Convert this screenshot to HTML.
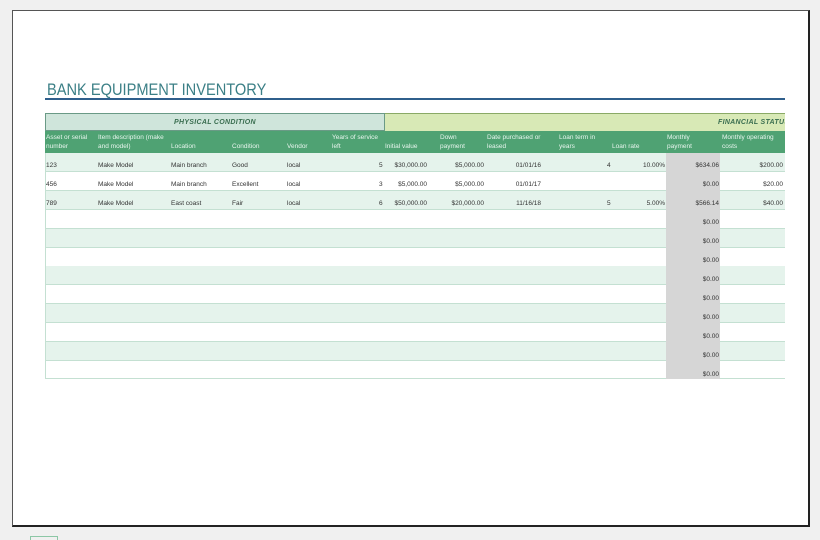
<!DOCTYPE html>
<html><head><style>
*{margin:0;padding:0;box-sizing:border-box}
body{width:820px;height:539px;background:#f0f0f0;position:relative;overflow:hidden;font-family:"Liberation Sans",sans-serif}
.page{position:absolute;left:12px;top:10px;width:798px;height:517px;background:#fff;border:1px solid #555;border-right:2px solid #222;border-bottom:2px solid #222}
.a{position:absolute;white-space:nowrap;font-size:6.5px;color:#333;line-height:8px}
.h{color:#e8f5ee;font-size:6.5px;position:absolute;white-space:nowrap;line-height:9px}
.r{text-align:right}
.row{position:absolute;left:45px;width:740px;height:19px;border-bottom:1px solid #c4e0d2}
</style></head><body>
<div class="page"></div>
<div style="position:absolute;left:30px;top:536px;width:28px;height:4px;border:1px solid #8cc7a6;border-bottom:none"></div>
<div style="position:absolute;left:47px;top:80px;font-size:17px;color:#3b7f86;transform:scaleX(0.86);transform-origin:0 0;white-space:nowrap">BANK EQUIPMENT INVENTORY</div>
<div style="position:absolute;left:45px;top:98px;width:740px;height:2px;background:#2f5f8c"></div>
<div style="position:absolute;left:45px;top:113px;width:340px;height:18px;background:#cfe5db;border:1px solid #6a9a86"></div>
<div style="position:absolute;left:385px;top:113px;width:400px;height:18px;background:#d8e9b6;border-top:1px solid #8aaa66;overflow:hidden"><div style="position:absolute;left:333px;top:5px;font-size:7px;font-weight:bold;font-style:italic;color:#3a6e50;letter-spacing:0.3px;white-space:nowrap">FINANCIAL STATUS</div></div>
<div style="position:absolute;left:174px;top:119px;font-size:7px;font-weight:bold;font-style:italic;color:#3a6e50;letter-spacing:0.3px">PHYSICAL CONDITION</div>
<div style="position:absolute;left:45px;top:131px;width:740px;height:22px;background:#4fa273"></div>
<div class="h" style="left:46px;top:133px">Asset or serial<br>number</div>
<div class="h" style="left:98px;top:133px">Item description (make<br>and model)</div>
<div class="h" style="left:171px;top:142px">Location</div>
<div class="h" style="left:232px;top:142px">Condition</div>
<div class="h" style="left:287px;top:142px">Vendor</div>
<div class="h" style="left:332px;top:133px">Years of service<br>left</div>
<div class="h" style="left:385px;top:142px">Initial value</div>
<div class="h" style="left:440px;top:133px">Down<br>payment</div>
<div class="h" style="left:487px;top:133px">Date purchased or<br>leased</div>
<div class="h" style="left:559px;top:133px">Loan term in<br>years</div>
<div class="h" style="left:612px;top:142px">Loan rate</div>
<div class="h" style="left:667px;top:133px">Monthly<br>payment</div>
<div class="h" style="left:722px;top:133px">Monthly operating<br>costs</div>
<div class="row" style="top:153px;background:#e5f3ec"></div>
<div class="row" style="top:172px"></div>
<div class="row" style="top:191px;background:#e5f3ec"></div>
<div class="row" style="top:210px"></div>
<div class="row" style="top:229px;background:#e5f3ec"></div>
<div class="row" style="top:248px"></div>
<div class="row" style="top:266px;background:#e5f3ec"></div>
<div class="row" style="top:285px"></div>
<div class="row" style="top:304px;background:#e5f3ec"></div>
<div class="row" style="top:323px"></div>
<div class="row" style="top:342px;background:#e5f3ec"></div>
<div class="row" style="top:360px"></div>
<div style="position:absolute;left:45px;top:153px;width:1px;height:226px;background:#c4e0d2"></div>
<div style="position:absolute;left:666px;top:153px;width:54px;height:226px;background:#d6d6d6"></div>
<div class="a" style="left:46px;top:162px">123</div><div class="a" style="left:98px;top:162px">Make Model</div><div class="a" style="left:171px;top:162px">Main branch</div><div class="a" style="left:232px;top:162px">Good</div><div class="a" style="left:287px;top:162px">local</div>
<div class="a" style="left:379px;top:162px">5</div><div class="a r" style="right:393px;top:162px">$30,000.00</div><div class="a r" style="right:336px;top:162px">$5,000.00</div><div class="a r" style="right:279px;top:162px">01/01/16</div><div class="a" style="left:607px;top:162px">4</div><div class="a r" style="right:155px;top:162px">10.00%</div><div class="a r" style="right:101px;top:162px">$634.06</div><div class="a r" style="right:37px;top:162px">$200.00</div>
<div class="a" style="left:46px;top:181px">456</div><div class="a" style="left:98px;top:181px">Make Model</div><div class="a" style="left:171px;top:181px">Main branch</div><div class="a" style="left:232px;top:181px">Excellent</div><div class="a" style="left:287px;top:181px">local</div>
<div class="a" style="left:379px;top:181px">3</div><div class="a r" style="right:393px;top:181px">$5,000.00</div><div class="a r" style="right:336px;top:181px">$5,000.00</div><div class="a r" style="right:279px;top:181px">01/01/17</div><div class="a r" style="right:101px;top:181px">$0.00</div><div class="a r" style="right:37px;top:181px">$20.00</div>
<div class="a" style="left:46px;top:200px">789</div><div class="a" style="left:98px;top:200px">Make Model</div><div class="a" style="left:171px;top:200px">East coast</div><div class="a" style="left:232px;top:200px">Fair</div><div class="a" style="left:287px;top:200px">local</div>
<div class="a" style="left:379px;top:200px">6</div><div class="a r" style="right:393px;top:200px">$50,000.00</div><div class="a r" style="right:336px;top:200px">$20,000.00</div><div class="a r" style="right:279px;top:200px">11/16/18</div><div class="a" style="left:607px;top:200px">5</div><div class="a r" style="right:155px;top:200px">5.00%</div><div class="a r" style="right:101px;top:200px">$566.14</div><div class="a r" style="right:37px;top:200px">$40.00</div>
<div class="a r" style="right:101px;top:219px">$0.00</div>
<div class="a r" style="right:101px;top:238px">$0.00</div>
<div class="a r" style="right:101px;top:257px">$0.00</div>
<div class="a r" style="right:101px;top:276px">$0.00</div>
<div class="a r" style="right:101px;top:295px">$0.00</div>
<div class="a r" style="right:101px;top:314px">$0.00</div>
<div class="a r" style="right:101px;top:333px">$0.00</div>
<div class="a r" style="right:101px;top:352px">$0.00</div>
<div class="a r" style="right:101px;top:371px">$0.00</div>
</body></html>
